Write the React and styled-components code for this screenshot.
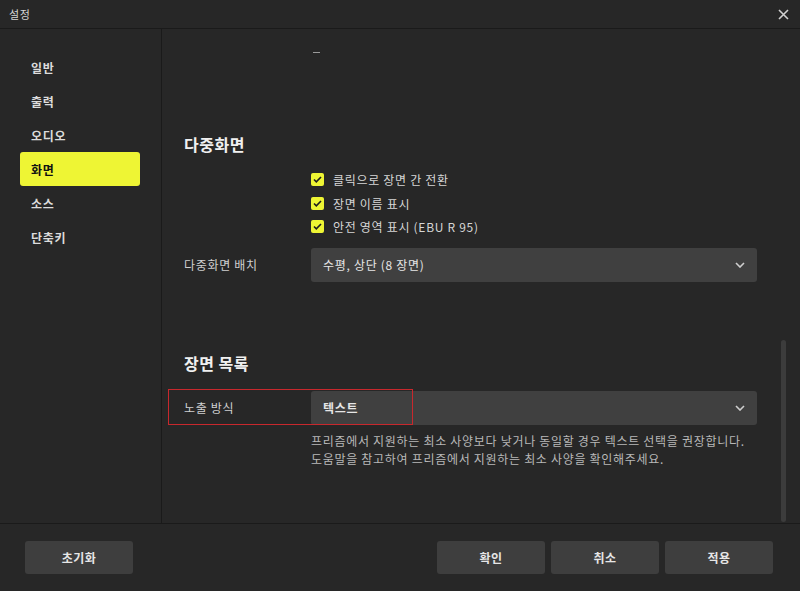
import React, { useState } from 'react'
import styled, { createGlobalStyle } from 'styled-components'

const GlobalStyle = createGlobalStyle`
  html, body {
    margin: 0;
    background: #272727;
  }
  * { box-sizing: border-box; }
`

const Window = styled.div`
  width: 800px;
  height: 591px;
  display: flex;
  flex-direction: column;
  background: #272727;
  color: #dcdcdc;
  font-family: 'Noto Sans CJK KR', 'Noto Sans', sans-serif;
  font-size: 12px;
  letter-spacing: 0.7px;
`

const TitleBar = styled.header`
  height: 29px;
  flex: none;
  display: flex;
  align-items: center;
  justify-content: space-between;
  padding: 0 10px 0 9px;
  border-bottom: 1px solid #1a1a1a;
  font-size: 11px;
  color: #d6d6d6;
`

const CloseButton = styled.button`
  background: none;
  border: 0;
  padding: 0;
  width: 14px;
  height: 14px;
  display: flex;
  align-items: center;
  justify-content: center;
  cursor: pointer;
`

const Body = styled.div`
  flex: 1;
  display: flex;
  min-height: 0;
`

const Sidebar = styled.nav`
  width: 162px;
  flex: none;
  border-right: 1px solid #1a1a1a;
  padding: 21px 0 0 20px;
  display: flex;
  flex-direction: column;
`

const NavItem = styled.div`
  width: 120px;
  height: 34px;
  display: flex;
  align-items: center;
  padding-left: 11px;
  border-radius: 3px;
  font-weight: 700;
  font-size: 12px;
  color: ${p => (p.$active ? '#111' : '#dcdcdc')};
  background: ${p => (p.$active ? '#eef534' : 'transparent')};
  cursor: pointer;
`

const Content = styled.main`
  flex: 1;
  display: flex;
  min-width: 0;
`

const Scroller = styled.div`
  flex: 1;
  padding: 13px 24px 0 22px;
  display: flex;
  flex-direction: column;
`

const Dash = styled.div`
  margin-left: 129px;
  width: 7px;
  height: 1px;
  margin-top: 10px;
  background: #9a9a9a;
`

const SectionTitle = styled.h2`
  margin: ${p => p.$top}px 0 0;
  font-size: 16px;
  font-weight: 700;
  letter-spacing: 0.5px;
  color: #f0f0f0;
  height: 24px;
  line-height: 24px;
`

const Row = styled.div`
  position: relative;
  display: grid;
  grid-template-columns: 127px 1fr;
  align-items: center;
  margin-top: ${p => p.$mt || 0}px;
`

const Label = styled.div`
  color: #d0d0d0;
  font-size: 12px;
`

const CheckList = styled.div`
  display: flex;
  flex-direction: column;
  gap: 6px;
`

const CheckRow = styled.label`
  display: flex;
  align-items: center;
  gap: 9px;
  height: 17.5px;
  color: #d6d6d6;
  cursor: pointer;
`

const Box = styled.span`
  width: 13px;
  height: 13px;
  border-radius: 2px;
  background: #eef534;
  display: flex;
  align-items: center;
  justify-content: center;
  flex: none;
`

const Select = styled.div`
  height: 34px;
  border-radius: 3px;
  background: #404040;
  display: flex;
  align-items: center;
  justify-content: space-between;
  padding: 0 12px 0 12px;
  color: #e6e6e6;
  font-size: 12px;
  font-weight: ${p => (p.$bold ? 700 : 400)};
`

const Highlight = styled.div`
  position: absolute;
  left: -16px;
  top: -2px;
  width: 245px;
  height: 36px;
  border: 1px solid #c8282d;
  pointer-events: none;
`

const Help = styled.p`
  margin: 7px 0 0 127px;
  color: #b8b8b8;
  font-size: 12px;
  line-height: 18px;
`

const ScrollTrack = styled.div`
  width: 5px;
  flex: none;
  margin-right: 14px;
  padding: 311px 0 1px;
  display: flex;
`

const Thumb = styled.div`
  flex: 1;
  border-radius: 3px;
  background: #3c3c3c;
`

const Footer = styled.footer`
  height: 68px;
  flex: none;
  border-top: 1px solid #1a1a1a;
  display: flex;
  justify-content: space-between;
  padding: 17px 27px 0 25px;
`

const ButtonGroup = styled.div`
  display: flex;
  gap: 6px;
`

const Button = styled.button`
  width: 108px;
  height: 33px;
  border: 0;
  border-radius: 3px;
  background: #3e3e3e;
  color: #e6e6e6;
  font-family: inherit;
  font-size: 12px;
  font-weight: 700;
  letter-spacing: 0.5px;
  cursor: pointer;
`

const Chevron = () => (
  <svg width="10" height="6" viewBox="0 0 10 6">
    <path d="M1 1l4 4 4-4" fill="none" stroke="#cfcfcf" strokeWidth="1.6" />
  </svg>
)

const Check = () => (
  <svg width="9" height="7" viewBox="0 0 9 7">
    <path d="M1 3.5l2.3 2.3L8 1" fill="none" stroke="#1d1d1d" strokeWidth="1.6" />
  </svg>
)

const menu = ['일반', '출력', '오디오', '화면', '소스', '단축키']
const checks = ['클릭으로 장면 간 전환', '장면 이름 표시', '안전 영역 표시 (EBU R 95)']

export default function App() {
  const [active, setActive] = useState(3)

  return (
    <Window>
      <GlobalStyle />
      <TitleBar>
        <span>설정</span>
        <CloseButton aria-label="닫기">
          <svg width="11" height="11" viewBox="0 0 11 11">
            <path d="M1 1l9 9M10 1l-9 9" stroke="#d0d0d0" strokeWidth="1.6" />
          </svg>
        </CloseButton>
      </TitleBar>
      <Body>
        <Sidebar>
          {menu.map((m, i) => (
            <NavItem key={m} $active={i === active} onClick={() => setActive(i)}>
              {m}
            </NavItem>
          ))}
        </Sidebar>
        <Content>
          <Scroller>
            <Dash />
            <SectionTitle $top={79}>다중화면</SectionTitle>
            <Row $mt={15}>
              <span />
              <CheckList>
                {checks.map(c => (
                  <CheckRow key={c}>
                    <Box><Check /></Box>
                    {c}
                  </CheckRow>
                ))}
              </CheckList>
            </Row>
            <Row $mt={12}>
              <Label>다중화면 배치</Label>
              <Select>
                수평, 상단 (8 장면)
                <Chevron />
              </Select>
            </Row>
            <SectionTitle $top={69}>장면 목록</SectionTitle>
            <Row $mt={16}>
              <Label>노출 방식</Label>
              <Select $bold>
                텍스트
                <Chevron />
              </Select>
              <Highlight />
            </Row>
            <Help>
              프리즘에서 지원하는 최소 사양보다 낮거나 동일할 경우 텍스트 선택을 권장합니다.
              <br />
              도움말을 참고하여 프리즘에서 지원하는 최소 사양을 확인해주세요.
            </Help>
          </Scroller>
          <ScrollTrack>
            <Thumb />
          </ScrollTrack>
        </Content>
      </Body>
      <Footer>
        <Button>초기화</Button>
        <ButtonGroup>
          <Button>확인</Button>
          <Button>취소</Button>
          <Button>적용</Button>
        </ButtonGroup>
      </Footer>
    </Window>
  )
}
